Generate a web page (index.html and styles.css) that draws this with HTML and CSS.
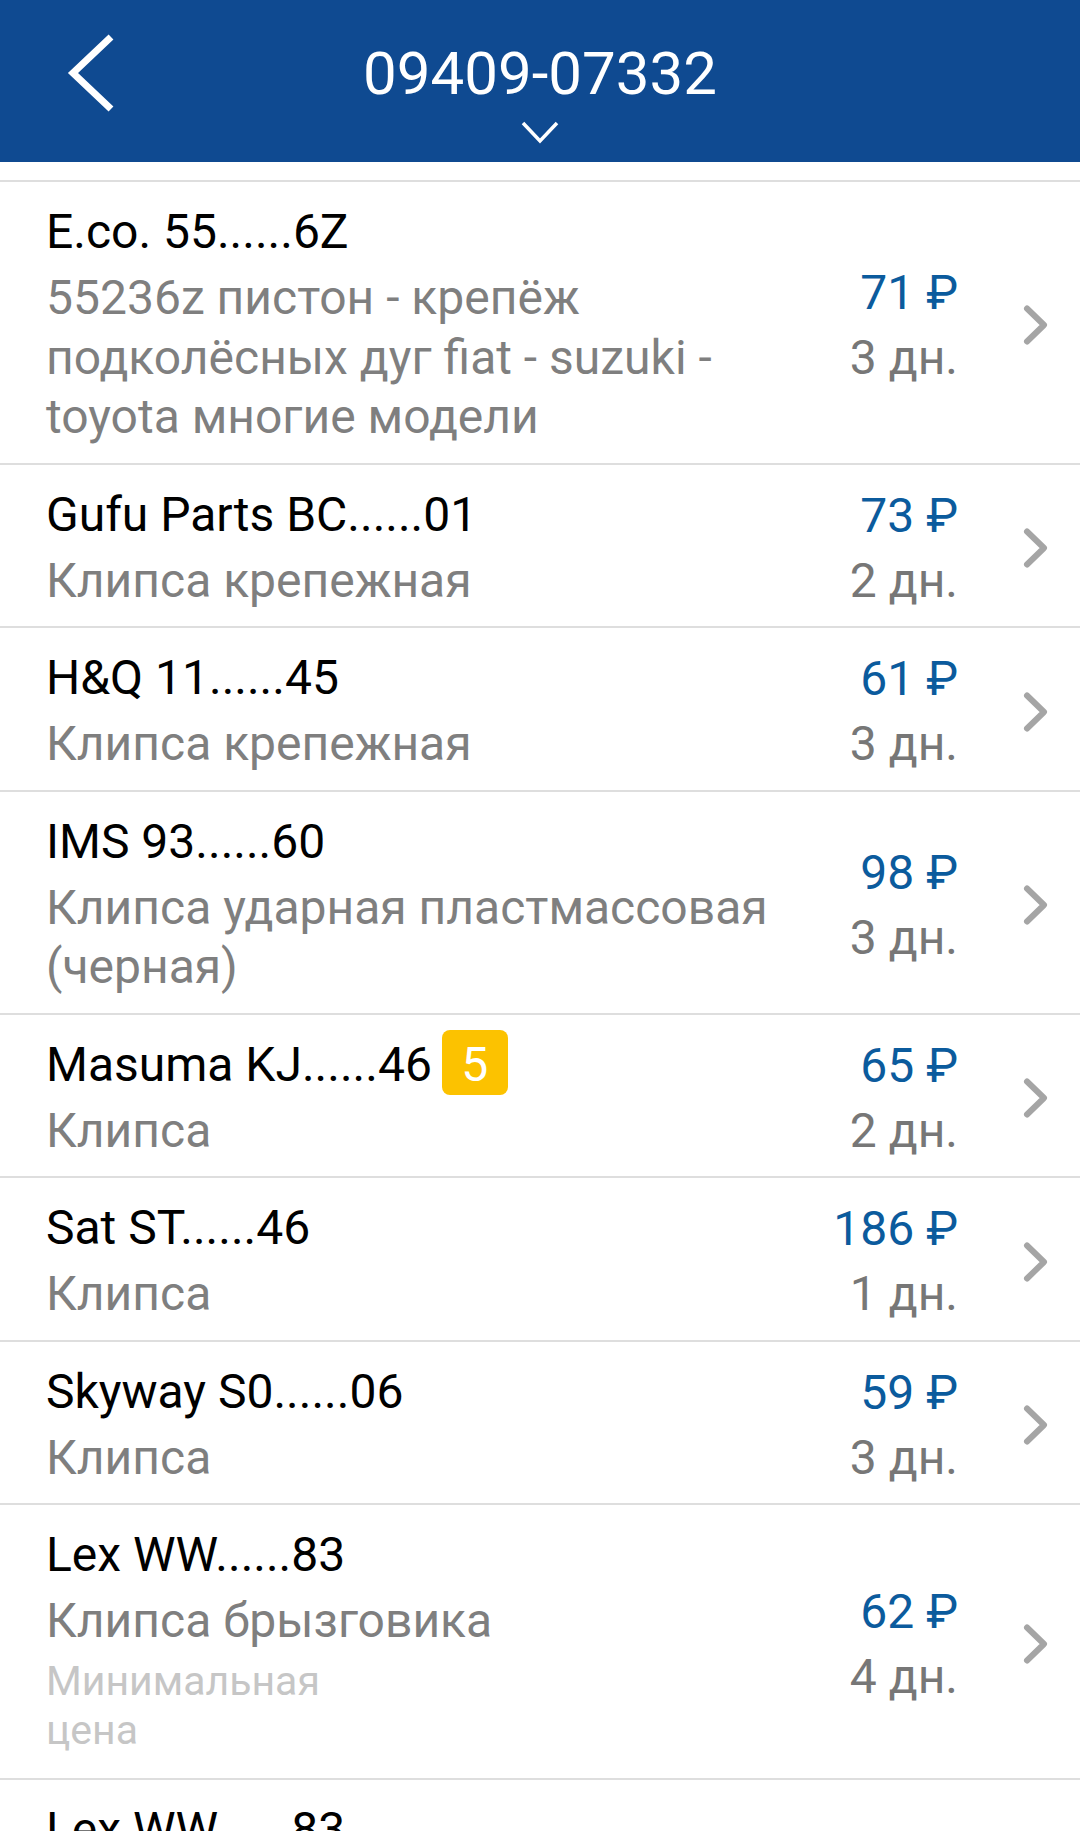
FILE: index.html
```html
<!DOCTYPE html>
<html>
<head>
    <meta charset="utf-8" />
    <title>09409-07332</title>
    <link rel="stylesheet" href="styles.css">
</head>
<body>
    <div class="screen">
        <div class="topbar">
            <div class="back">
                <svg width="56" height="86" viewBox="0 0 56 86"><path d="M48 7 L10 43 L48 79" fill="none" stroke="#fff" stroke-width="7" /></svg>
            </div>
            <div class="heading">
                <h1>09409-07332</h1>
                <svg width="40" height="26" viewBox="0 0 40 26"><path d="M3 3 L20 21 L37 3" fill="none" stroke="#fff" stroke-width="3.5" /></svg>
            </div>
            <div></div>
        </div>

        <div class="offers">
            <div class="offer">
                <div class="info">
                    <div class="brand">E.co. 55......6Z</div>
                    <div class="desc">55236z пистон - крепёж подколёсных дуг fiat - suzuki - toyota многие модели</div>
                </div>
                <div class="price"><div class="cost">71 ₽</div><div class="days">3 дн.</div></div>
                <div class="go"><svg width="30" height="48" viewBox="0 0 30 48"><path d="M7 7.5 L24 24 L7 40.5" /></svg></div>
            </div>
            <div class="offer">
                <div class="info">
                    <div class="brand">Gufu Parts BC......01</div>
                    <div class="desc">Клипса крепежная</div>
                </div>
                <div class="price"><div class="cost">73 ₽</div><div class="days">2 дн.</div></div>
                <div class="go"><svg width="30" height="48" viewBox="0 0 30 48"><path d="M7 7.5 L24 24 L7 40.5" /></svg></div>
            </div>
            <div class="offer">
                <div class="info">
                    <div class="brand">H&amp;Q 11......45</div>
                    <div class="desc">Клипса крепежная</div>
                </div>
                <div class="price"><div class="cost">61 ₽</div><div class="days">3 дн.</div></div>
                <div class="go"><svg width="30" height="48" viewBox="0 0 30 48"><path d="M7 7.5 L24 24 L7 40.5" /></svg></div>
            </div>
            <div class="offer">
                <div class="info">
                    <div class="brand">IMS 93......60</div>
                    <div class="desc">Клипса ударная пластмассовая (черная)</div>
                </div>
                <div class="price"><div class="cost">98 ₽</div><div class="days">3 дн.</div></div>
                <div class="go"><svg width="30" height="48" viewBox="0 0 30 48"><path d="M7 7.5 L24 24 L7 40.5" /></svg></div>
            </div>
            <div class="offer">
                <div class="info">
                    <div class="brand">Masuma KJ......46<span class="badge">5</span></div>
                    <div class="desc">Клипса</div>
                </div>
                <div class="price"><div class="cost">65 ₽</div><div class="days">2 дн.</div></div>
                <div class="go"><svg width="30" height="48" viewBox="0 0 30 48"><path d="M7 7.5 L24 24 L7 40.5" /></svg></div>
            </div>
            <div class="offer">
                <div class="info">
                    <div class="brand">Sat ST......46</div>
                    <div class="desc">Клипса</div>
                </div>
                <div class="price"><div class="cost">186 ₽</div><div class="days">1 дн.</div></div>
                <div class="go"><svg width="30" height="48" viewBox="0 0 30 48"><path d="M7 7.5 L24 24 L7 40.5" /></svg></div>
            </div>
            <div class="offer">
                <div class="info">
                    <div class="brand">Skyway S0......06</div>
                    <div class="desc">Клипса</div>
                </div>
                <div class="price"><div class="cost">59 ₽</div><div class="days">3 дн.</div></div>
                <div class="go"><svg width="30" height="48" viewBox="0 0 30 48"><path d="M7 7.5 L24 24 L7 40.5" /></svg></div>
            </div>
            <div class="offer">
                <div class="info">
                    <div class="brand">Lex WW......83</div>
                    <div class="desc">Клипса брызговика</div>
                    <div class="note">Минимальная цена</div>
                </div>
                <div class="price"><div class="cost">62 ₽</div><div class="days">4 дн.</div></div>
                <div class="go"><svg width="30" height="48" viewBox="0 0 30 48"><path d="M7 7.5 L24 24 L7 40.5" /></svg></div>
            </div>
            <div class="offer">
                <div class="info">
                    <div class="brand">Lex WW......83</div>
                    <div class="desc">Клипса брызговика</div>
                    <div class="note">Минимальная цена</div>
                </div>
                <div class="price"><div class="cost">64 ₽</div><div class="days">4 дн.</div></div>
                <div class="go"><svg width="30" height="48" viewBox="0 0 30 48"><path d="M7 7.5 L24 24 L7 40.5" /></svg></div>
            </div>
        </div>
    </div>
</body>
</html>
```

FILE: styles.css
```css
body {
    margin: 0;
    font-family: Roboto, "Noto Sans", sans-serif;
    background: #fff;
}

.screen {
    height: 100vh;
    display: flex;
    flex-direction: column;
    overflow: hidden;
}

.topbar {
    flex: none;
    height: 162px;
    background: #0f4a91;
    color: #fff;
    display: grid;
    grid-template-columns: 1fr auto 1fr;
}

    .back {
        padding: 30px 0 0 63px;
    }

    .back svg {
        display: block;
    }

    .heading {
        display: flex;
        flex-direction: column;
        align-items: center;
    }

    .heading h1 {
        margin: 0;
        padding-top: 39px;
        font-size: 60px;
        font-weight: 400;
        line-height: 70px;
    }

    .heading svg {
        display: block;
        margin-top: 11px;
    }

.offers {
    flex: 1;
    overflow: hidden;
    margin-top: 18px;
    border-top: 2px solid #dedede;
}

.offer {
    display: flex;
    align-items: center;
    padding: 22px 0 16px 46px;
    border-bottom: 2px solid #dedede;
}

.info {
    flex: 1;
    min-width: 0;
}

.brand {
    font-size: 48px;
    line-height: 56px;
    color: #000;
    margin-bottom: 8px;
}

.badge {
    display: inline-block;
    width: 66px;
    height: 61px;
    padding-top: 4px;
    margin: -10px 0 -10px 10px;
    line-height: 61px;
    text-align: center;
    color: #fff;
    background: #fcc200;
    border-radius: 8px;
}

.desc {
    font-size: 48px;
    line-height: 59.5px;
    color: #7f7f7f;
}

.note {
    width: 300px;
    margin: 6px 0 7px;
    font-size: 41px;
    line-height: 49px;
    color: #c6c6c6;
}

.price {
    width: 158px;
    text-align: right;
}

.cost {
    font-size: 48px;
    line-height: 56px;
    color: #0b5b9d;
}

.days {
    margin-top: 9px;
    font-size: 48px;
    line-height: 56px;
    color: #777;
}

.go {
    width: 122px;
    box-sizing: border-box;
    padding-left: 62px;
    display: flex;
}

    .go svg path {
        fill: none;
        stroke: #a5a5a5;
        stroke-width: 6;
        stroke-linecap: round;
        stroke-linejoin: round;
    }
```
